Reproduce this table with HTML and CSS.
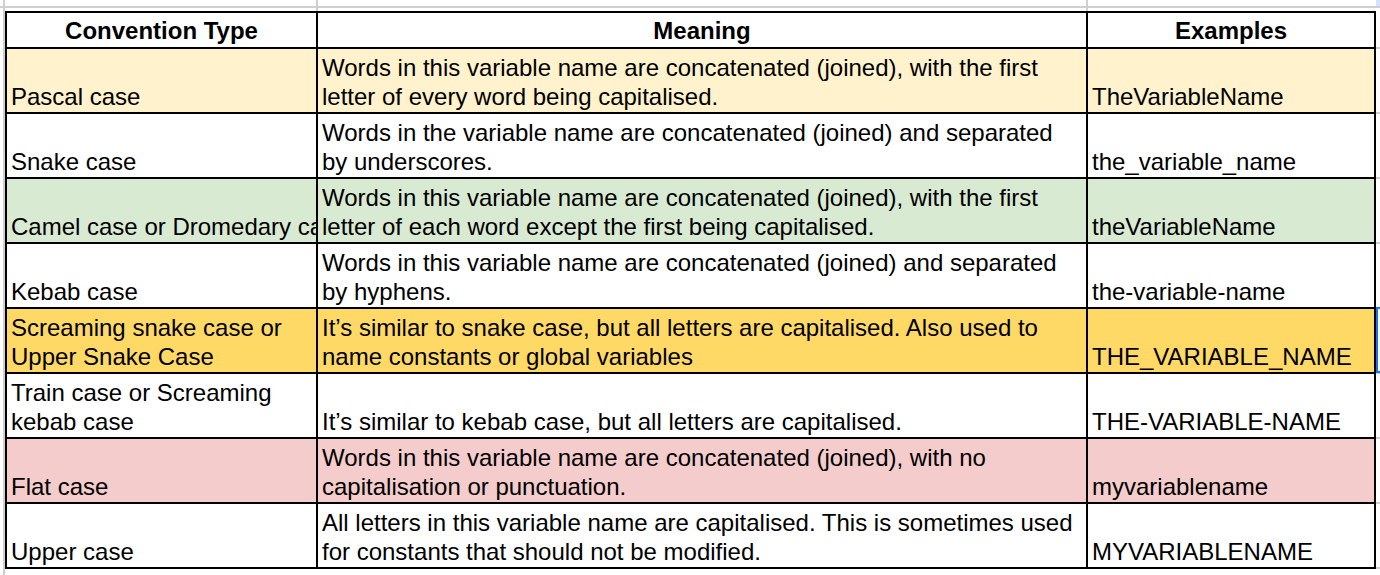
FILE: index.html
```html
<!DOCTYPE html>
<html lang="en">
<head>
<meta charset="utf-8">
<title>Naming conventions</title>
<link rel="stylesheet" href="styles.css">
</head>
<body>
<div class="sheet">
  <div class="grid">
    <div class="cell head">Convention Type</div>
    <div class="cell head">Meaning</div>
    <div class="cell head">Examples</div>

    <div class="cell yellow">Pascal case</div>
    <div class="cell yellow">Words in this variable name are concatenated (joined), with the first letter of every word being capitalised.</div>
    <div class="cell yellow">TheVariableName</div>

    <div class="cell">Snake case</div>
    <div class="cell">Words in the variable name are concatenated (joined) and separated by underscores.</div>
    <div class="cell">the_variable_name</div>

    <div class="cell green clip">Camel case or Dromedary case</div>
    <div class="cell green">Words in this variable name are concatenated (joined), with the first letter of each word except the first being capitalised.</div>
    <div class="cell green">theVariableName</div>

    <div class="cell">Kebab case</div>
    <div class="cell">Words in this variable name are concatenated (joined) and separated by hyphens.</div>
    <div class="cell">the-variable-name</div>

    <div class="cell gold">Screaming snake case or Upper Snake Case</div>
    <div class="cell gold">It’s similar to snake case, but all letters are capitalised. Also used to name constants or global variables</div>
    <div class="cell gold">THE_VARIABLE_NAME</div>

    <div class="cell">Train case or Screaming kebab case</div>
    <div class="cell">It’s similar to kebab case, but all letters are capitalised.</div>
    <div class="cell">THE-VARIABLE-NAME</div>

    <div class="cell red">Flat case</div>
    <div class="cell red">Words in this variable name are concatenated (joined), with no capitalisation or punctuation.</div>
    <div class="cell red">myvariablename</div>

    <div class="cell">Upper case</div>
    <div class="cell">All letters in this variable name are capitalised. This is sometimes used for constants that should not be modified.</div>
    <div class="cell">MYVARIABLENAME</div>
  </div>
  <div class="selection"></div>
</div>
</body>
</html>
```

FILE: styles.css
```css
html, body {
  margin: 0;
  padding: 0;
  background: #ffffff;
  overflow: hidden;
}

.sheet {
  position: relative;
  width: 1380px;
  height: 575px;
  box-sizing: border-box;
  padding: 11px 0 0 5px;
  font-family: "Liberation Sans", Arial, sans-serif;
  font-size: 24px;
  line-height: 29px;
  color: #000;
  background:
    linear-gradient(#d3e3fd, #d3e3fd) 1376px 0 / 4px 6px no-repeat,
    linear-gradient(#cfcfcf, #cfcfcf) 0 6px / 100% 2px no-repeat,
    linear-gradient(#cfcfcf, #cfcfcf) 3px 0 / 2px 100% no-repeat,
    linear-gradient(#cfcfcf, #cfcfcf) 316px 0 / 2px 11px no-repeat,
    linear-gradient(#cfcfcf, #cfcfcf) 1086px 0 / 2px 11px no-repeat,
    repeating-linear-gradient(to bottom, #cfcfcf 0 2px, transparent 2px 65px) 1376px 47px / 4px 528px no-repeat,
    #ffffff;
}

.grid {
  display: grid;
  grid-template-columns: 309px 768px 286px;
  grid-template-rows: 34px repeat(8, 63px);
  gap: 2px;
  padding: 2px;
  width: max-content;
  background: #000;
}

.cell {
  display: flex;
  flex-direction: column;
  justify-content: flex-end;
  padding: 0 5px 1px 4px;
  background: #ffffff;
  overflow: hidden;
}

.head {
  font-weight: bold;
  text-align: center;
  padding: 0 4px 2px 4px;
}

.clip {
  white-space: nowrap;
  padding-right: 0;
}

.yellow { background: #fff2cc; }
.green  { background: #d9ead3; }
.gold   { background: #ffd966; }
.red    { background: #f4cccc; }

.selection {
  position: absolute;
  left: 1376px;
  top: 307px;
  width: 20px;
  height: 62px;
  border: 2px solid #1a73e8;
  border-right: none;
}
```
